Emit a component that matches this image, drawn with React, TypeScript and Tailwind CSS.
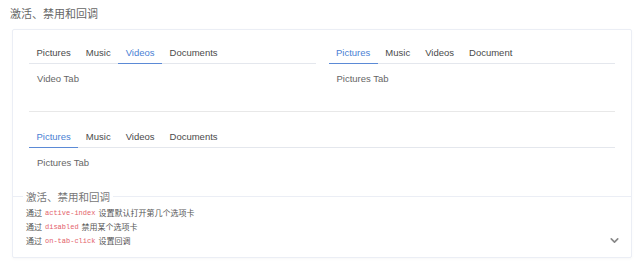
import { ChevronDown } from 'lucide-react'

const latin = { fontFamily: '"Liberation Sans", "Noto Sans CJK SC", sans-serif' }
const cjk = { fontFamily: '"Noto Sans CJK SC", "Liberation Sans", sans-serif' }

type TabsProps = {
  labels: string[]
  active: number
  content: string
  className?: string
}

const Tabs = ({ labels, active, content, className }: TabsProps) => (
  <div className={className}>
    <div className="flex h-[24px] border-b border-[#e4e7ed]">
      {labels.map((label, i) => (
        <div
          key={label}
          className={
            i === active
              ? 'relative flex items-center px-[7.5px] pt-[4px] text-[9.5px] text-[#4a7fd4]'
              : 'relative flex items-center px-[7.5px] pt-[4px] text-[9.5px] text-[#4a4a4a]'
          }
        >
          {label}
          {i === active && <div className="absolute left-0 right-0 -bottom-px h-px bg-[#5b8ad6]" />}
        </div>
      ))}
    </div>
    <div className="mt-[8px] pl-[8px] text-[9.5px] leading-[14px] text-[#666]">{content}</div>
  </div>
)

const Code = ({ children }: { children: string }) => (
  <code
    className="mx-[3px] text-[7px] leading-[14px] text-[#e3616a]"
    style={{ fontFamily: '"Liberation Mono", monospace' }}
  >
    {children}
  </code>
)

const Line = ({ children }: { children: React.ReactNode }) => (
  <p className="flex h-[14px] items-center text-[8px] leading-[14px] text-[#555]">{children}</p>
)

const App = () => {
  return (
    <div className="w-[640px] h-[264px] bg-white pl-[10px] overflow-hidden" style={latin}>
      <h2 className="h-[26px] leading-[26px] text-[11px] text-[#666]" style={cjk}>
        激活、禁用和回调
      </h2>

      <div className="ml-[2px] mt-[3px] w-[620px] border border-[#ebeef5] rounded-[2px] shadow-[0_1px_3px_rgba(0,0,0,0.03)]">
        <div className="px-[16px] pt-[10px]">
          <div className="flex gap-[13px]">
            <Tabs
              className="w-[287px]"
              labels={['Pictures', 'Music', 'Videos', 'Documents']}
              active={2}
              content="Video Tab"
            />
            <Tabs
              className="w-[287px]"
              labels={['Pictures', 'Music', 'Videos', 'Document']}
              active={0}
              content="Pictures Tab"
            />
          </div>

          <div className="mt-[25px] border-t border-[#e8e8e8]" />

          <Tabs
            className="mt-[12px]"
            labels={['Pictures', 'Music', 'Videos', 'Documents']}
            active={0}
            content="Pictures Tab"
          />
        </div>

        <div className="relative mt-[26px] border-t border-[#ebeef5] pt-[9px] pb-[9px] pl-[13px]" style={cjk}>
          <div className="absolute left-[10px] top-0 -translate-y-1/2 bg-white px-[3px] text-[10.5px] leading-[14px] text-[#777]">
            激活、禁用和回调
          </div>
          <Line>
            通过<Code>active-index</Code>设置默认打开第几个选项卡
          </Line>
          <Line>
            通过<Code>disabled</Code>禁用某个选项卡
          </Line>
          <Line>
            通过<Code>on-tab-click</Code>设置回调
          </Line>
          <ChevronDown
            size={13}
            strokeWidth={3}
            className="absolute right-[10px] bottom-[10px] text-[#888]"
          />
        </div>
      </div>
    </div>
  )
}

export default App
